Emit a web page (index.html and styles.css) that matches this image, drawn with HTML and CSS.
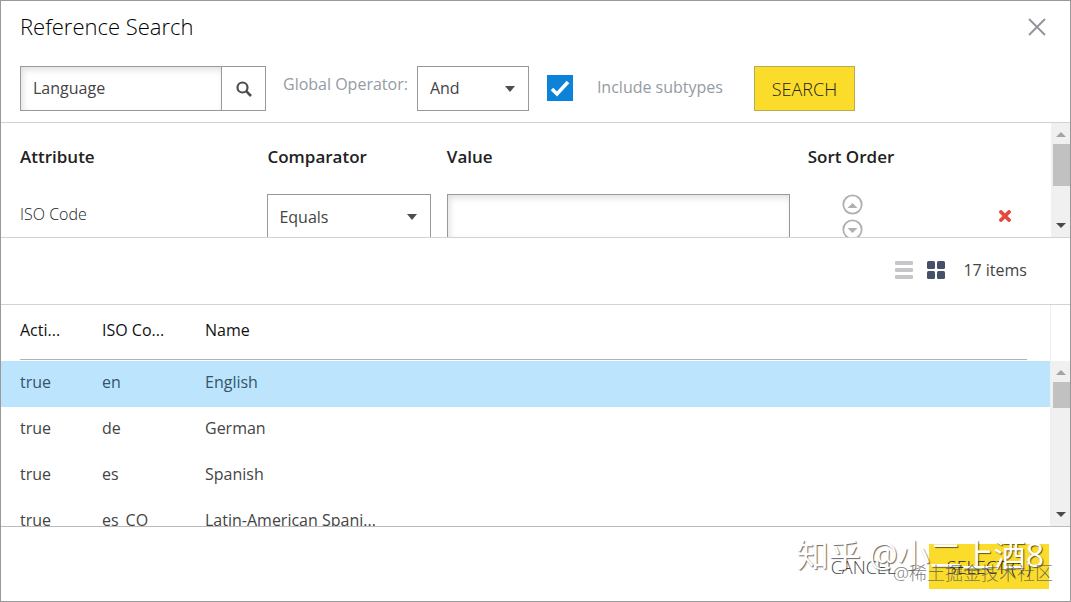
FILE: index.html
```html
<!DOCTYPE html>
<html lang="en">
<head>
    <meta charset="UTF-8">
    <meta name="viewport" content="width=device-width, initial-scale=1.0">
    <title>Reference Search</title>
    <link rel="stylesheet" href="styles.css">
</head>
<body>

    <main class="dialog">
        <header class="dialog-header">
            <h1>Reference Search</h1>
            <button class="close" type="button" aria-label="Close">
                <svg width="18" height="18" viewBox="0 0 18 18"><path d="M1 1l16 16M17 1L1 17" stroke="#8f939b" stroke-width="1.8" fill="none"/></svg>
            </button>
        </header>

        <form class="toolbar" onsubmit="return false">
            <div class="type-search">
                <input class="field" type="text" value="Language" aria-label="Type">
                <button class="lookup" type="button" aria-label="Find type">
                    <svg width="16" height="16" viewBox="0 0 16 16"><circle cx="6.5" cy="6.5" r="5" fill="none" stroke="#4d4d4d" stroke-width="2.2"/><path d="M10.2 10.2L15 15" stroke="#4d4d4d" stroke-width="2.6"/></svg>
                </button>
            </div>
            <label class="operator-label" for="operator">Global Operator:</label>
            <select id="operator" class="select operator">
                <option>And</option>
                <option>Or</option>
            </select>
            <input id="subtypes" class="check" type="checkbox" checked>
            <label class="subtypes-label" for="subtypes">Include subtypes</label>
            <button class="button search" type="submit">SEARCH</button>
        </form>

        <section class="conditions">
            <table class="condition-table">
                <thead>
                    <tr>
                        <th class="col-attribute">Attribute</th>
                        <th class="col-comparator">Comparator</th>
                        <th class="col-value">Value</th>
                        <th class="col-sort">Sort Order</th>
                        <th class="col-remove"></th>
                    </tr>
                </thead>
                <tbody>
                    <tr>
                        <td><span class="attribute">ISO Code</span></td>
                        <td>
                            <select class="select comparator" aria-label="Comparator">
                                <option>Equals</option>
                                <option>Contains</option>
                            </select>
                        </td>
                        <td><input class="field value" type="text" aria-label="Value"></td>
                        <td>
                            <div class="sort">
                                <button type="button" aria-label="Sort ascending">
                                    <svg width="21" height="21" viewBox="0 0 21 21"><circle cx="10.5" cy="10.5" r="9.2" fill="none" stroke="#b0b0b0" stroke-width="1.8"/><path d="M5.5 14L10.5 9l5 5z" fill="#b0b0b0"/></svg>
                                </button>
                                <button type="button" aria-label="Sort descending">
                                    <svg width="21" height="21" viewBox="0 0 21 21"><circle cx="10.5" cy="10.5" r="9.2" fill="none" stroke="#b0b0b0" stroke-width="1.8"/><path d="M5.5 9h10l-5 5z" fill="#b0b0b0"/></svg>
                                </button>
                            </div>
                        </td>
                        <td>
                            <button class="remove" type="button" aria-label="Remove">
                                <svg width="12" height="12" viewBox="0 0 12 12"><path d="M2 2l8 8M10 2l-8 8" stroke="#e8483b" stroke-width="3.8" stroke-linecap="round"/></svg>
                            </button>
                        </td>
                    </tr>
                </tbody>
            </table>
            <div class="scrollbar">
                <span class="arrow up"></span>
                <span class="thumb"></span>
                <span class="arrow down"></span>
            </div>
        </section>

        <section class="view-bar">
            <button type="button" aria-label="List view">
                <svg width="18" height="18" viewBox="0 0 18 18" fill="#c6c6c9"><rect width="18" height="4" rx="1"/><rect y="7" width="18" height="4" rx="1"/><rect y="14" width="18" height="4" rx="1"/></svg>
            </button>
            <button type="button" aria-label="Grid view">
                <svg width="18" height="18" viewBox="0 0 18 18" fill="#465069"><rect width="8" height="8" rx="1.5"/><rect x="10" width="8" height="8" rx="1.5"/><rect y="10" width="8" height="8" rx="1.5"/><rect x="10" y="10" width="8" height="8" rx="1.5"/></svg>
            </button>
            <span class="count">17 items</span>
        </section>

        <section class="results">
            <div class="results-view">
                <table class="result-table">
                    <thead>
                        <tr>
                            <th class="col-active"><div>Acti...</div></th>
                            <th class="col-iso"><div>ISO Co...</div></th>
                            <th><div>Name</div></th>
                        </tr>
                    </thead>
                    <tbody>
                        <tr class="selected"><td>true</td><td>en</td><td>English</td></tr>
                        <tr><td>true</td><td>de</td><td>German</td></tr>
                        <tr><td>true</td><td>es</td><td>Spanish</td></tr>
                        <tr><td>true</td><td>es_CO</td><td>Latin-American Spani...</td></tr>
                    </tbody>
                </table>
            </div>
            <div class="results-side">
                <div class="scrollbar">
                    <span class="arrow up"></span>
                    <span class="thumb small"></span>
                    <span class="arrow down"></span>
                </div>
            </div>
        </section>

        <footer class="dialog-footer">
            <button class="button cancel" type="button">CANCEL</button>
            <button class="button select-button" type="button">SELECT (1)</button>
            <span class="mark mark-large">知乎 @小二上酒8</span>
            <span class="mark mark-small">@稀土掘金技术社区</span>
        </footer>
    </main>

</body>
</html>
```
FILE: styles.css
```css
:root {
    --line: #d2d2d2;
    --field-border: #999999;
    --text: #444444;
    --muted: #959ba4;
    --yellow: #fbdc2a;
    --selected: #bce4fd;
}

* {
    box-sizing: border-box;
}

body {
    margin: 0;
    font-family: "Open Sans", "Noto Sans CJK SC", sans-serif;
    font-size: 16px;
    line-height: 22px;
    font-weight: 400;
    color: var(--text);
    background-color: #ffffff;
}

button, input, select {
    font: inherit;
    color: inherit;
    margin: 0;
    padding: 0;
    border-radius: 0;
}

button {
    background: none;
    border: none;
    cursor: pointer;
}

svg {
    display: block;
}

table {
    width: 100%;
    table-layout: fixed;
    border-collapse: collapse;
}

th, td {
    padding: 0;
    text-align: left;
    vertical-align: top;
}

.dialog {
    display: flex;
    flex-direction: column;
    height: 100vh;
    border: 1px solid #999999;
}

.dialog-header {
    display: flex;
    justify-content: space-between;
    align-items: center;
    height: 52px;
    padding: 0 24px 0 19px;
}

h1 {
    margin: 0;
    padding-bottom: 2px;
    font-size: 22px;
    line-height: 28px;
    font-weight: 300;
    color: #000000;
}

.toolbar {
    display: flex;
    align-items: center;
    padding: 13px 19px 11px;
    border-bottom: 1px solid var(--line);
}

.field {
    height: 45px;
    padding: 0 12px 2px;
    border: 1px solid var(--field-border);
    background-color: #ffffff;
    box-shadow: inset 2px 3px 6px rgba(0, 0, 0, 0.12);
    outline: none;
}

.type-search {
    display: flex;
    width: 246px;
}

.type-search .field {
    flex: 1;
    min-width: 0;
    border-right: none;
}

.lookup {
    display: flex;
    align-items: center;
    justify-content: center;
    width: 45px;
    border: 1px solid var(--field-border);
}

.operator-label {
    margin: 0 9px 10px 17px;
    color: var(--muted);
}

.select {
    height: 45px;
    padding: 0 12px 2px;
    appearance: none;
    border: 1px solid var(--field-border);
    background: #ffffff url("data:image/svg+xml,%3Csvg xmlns='http://www.w3.org/2000/svg' width='10' height='6'%3E%3Cpath d='M0 0h10L5 6z' fill='%234d4d4d'/%3E%3C/svg%3E") no-repeat right 13px center;
}

.operator {
    width: 112px;
}

.check {
    appearance: none;
    width: 26px;
    height: 26px;
    margin: 0 24px 2px 18px;
    background: #0c83d9 url("data:image/svg+xml,%3Csvg xmlns='http://www.w3.org/2000/svg' width='20' height='18'%3E%3Cpath d='M2 10l5 5L18 3' fill='none' stroke='white' stroke-width='3.5'/%3E%3C/svg%3E") no-repeat center;
}

.subtypes-label {
    margin: 0 31px 4px 0;
    color: var(--muted);
}

.button {
    height: 45px;
    font-size: 18px;
    font-weight: 300;
}

.search {
    width: 101px;
    background-color: var(--yellow);
    border: 1px solid #b9ab52;
}

.conditions {
    display: flex;
    height: 115px;
    overflow: hidden;
    border-bottom: 1px solid var(--line);
}

.condition-table {
    flex: 1;
    margin-left: 19px;
    height: 120px;
}

.condition-table th {
    height: 71px;
    padding-top: 23px;
    font-size: 17px;
    font-weight: 600;
    color: #222222;
}

.col-attribute {
    width: 24%;
}

.col-comparator {
    width: 17.4%;
}

.col-value {
    width: 35%;
}

.col-sort {
    width: 18.6%;
}

.attribute {
    display: block;
    padding-top: 9px;
    font-weight: 300;
    color: #222222;
}

.comparator {
    width: 91%;
    padding: 0 11px;
}

.value {
    width: 95%;
}

.sort {
    display: flex;
    flex-direction: column;
    gap: 4px;
    padding-left: 34px;
}

.sort button {
    width: 21px;
}

.remove {
    margin-top: 16px;
}

.scrollbar {
    display: flex;
    flex-direction: column;
    align-items: flex-end;
    width: 19px;
    background-color: #f0f0f0;
}

.arrow {
    width: 18px;
    height: 21px;
    background-color: #a3a3a3;
    clip-path: polygon(4px 14px, 9px 9px, 14px 14px);
}

.arrow.down {
    margin-top: auto;
    background-color: #4a4a4a;
    clip-path: polygon(4px 7px, 14px 7px, 9px 12px);
}

.thumb {
    width: 17px;
    height: 42px;
    background-color: #c1c1c1;
}

.thumb.small {
    height: 26px;
}

.view-bar {
    display: flex;
    align-items: center;
    justify-content: flex-end;
    gap: 14px;
    height: 67px;
    padding: 0 43px 2px 0;
    border-bottom: 1px solid var(--line);
}

.count {
    margin-left: 4px;
}

.results {
    display: flex;
    flex: 1;
    min-height: 0;
    border-bottom: 1px solid #bbbbbb;
}

.results-view {
    flex: 1;
    overflow: hidden;
}

.result-table th:first-child,
.result-table td:first-child {
    padding-left: 19px;
}

.result-table th {
    padding-bottom: 1px;
    font-weight: 500;
    color: #111111;
}

.result-table th div {
    height: 55px;
    padding-top: 14px;
    border-bottom: 1px solid #b0b4b8;
}

.result-table th:last-child {
    padding-right: 23px;
}

.result-table td {
    height: 46px;
    padding-top: 10px;
}

.col-active {
    width: 101px;
}

.col-iso {
    width: 103px;
}

.selected {
    background-color: var(--selected);
    color: #34546b;
}

.results-side {
    display: flex;
    width: 20px;
    padding-top: 56px;
    border-left: 1px solid #eeeeee;
}

.dialog-footer {
    position: relative;
    display: flex;
    justify-content: flex-end;
    height: 74px;
    padding: 17px 21px 0 0;
}

.cancel {
    margin-right: 33px;
}

.select-button {
    width: 120px;
    background-color: var(--yellow);
}

.search,
.select-button {
    color: #222222;
}

/* marks lie over the footer buttons */
.mark {
    position: absolute;
    white-space: nowrap;
    pointer-events: none;
    color: #ffffff;
}

.mark-large {
    right: 26px;
    top: 7px;
    font-size: 32px;
    line-height: 42px;
    text-shadow: 1px 1px 1px rgba(0, 0, 0, 0.6);
}

.mark-small {
    right: 17px;
    top: 34px;
    font-size: 18px;
    line-height: 24px;
    font-weight: 300;
    color: rgba(90, 90, 90, 0.8);
}
```
